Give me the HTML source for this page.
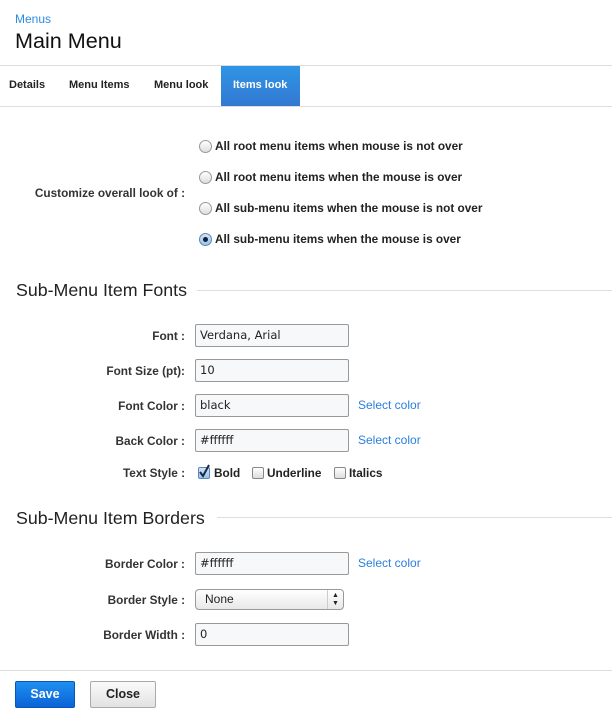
<!DOCTYPE html>
<html><head><style>
body{margin:0;width:612px;height:711px;background:#fff;font-family:"Liberation Sans",Arial,sans-serif;position:relative;overflow:hidden;color:#222}
.a{position:absolute;white-space:nowrap}
.lbl{position:absolute;right:427px;font-size:11.8px;font-weight:bold;color:#333;white-space:nowrap}
.in{position:absolute;left:195px;border:1px solid #999;background:#f7f8fa;font-family:"DejaVu Sans",sans-serif;font-size:11.5px;line-height:21px;padding-left:4px;box-sizing:border-box;width:154px;height:23px;border-radius:2px}
.sel{position:absolute;left:358px;font-size:12px;color:#2a7ee0}
.hl{position:absolute;height:1px;background:#ddd}
.rad{position:absolute;left:199px;width:11px;height:11px;border:1px solid #999;border-radius:50%;background:linear-gradient(#fff,#ddd)}
.rt{position:absolute;left:215px;font-size:11.8px;font-weight:bold;color:#222;white-space:nowrap}
.cb{position:absolute;width:10px;height:10px;border:1px solid #888;border-radius:2px;background:linear-gradient(#fff,#ddd)}
.ct{position:absolute;font-size:11.8px;font-weight:bold;color:#222}
</style></head><body>
<div class="a" style="left:15px;top:12px;font-size:12px;color:#2a8be6">Menus</div>
<div class="a" style="left:15px;top:28px;font-size:21.6px;color:#111">Main Menu</div>
<div class="hl" style="left:0;top:65px;width:612px"></div>
<div class="a" style="left:9px;top:79px;font-size:11px;font-weight:bold">Details</div>
<div class="a" style="left:69px;top:79px;font-size:11px;font-weight:bold">Menu Items</div>
<div class="a" style="left:154px;top:79px;font-size:11px;font-weight:bold">Menu look</div>
<div class="a" style="left:221px;top:66px;width:79px;height:40px;background:linear-gradient(#2f95e4,#3378d2)"></div>
<div class="a" style="left:233px;top:79px;font-size:11px;font-weight:bold;color:#fff">Items look</div>
<div class="hl" style="left:0;top:106px;width:612px"></div>

<div class="lbl" style="top:186px">Customize overall look of :</div>
<div class="rad" style="top:140px"></div><div class="rt" style="top:139px">All root menu items when mouse is not over</div>
<div class="rad" style="top:171px"></div><div class="rt" style="top:170px">All root menu items when the mouse is over</div>
<div class="rad" style="top:202px"></div><div class="rt" style="top:201px">All sub-menu items when the mouse is not over</div>
<div class="rad" style="top:233px;background:linear-gradient(#cfe3f7,#9cc3ea);border-color:#5a88b8"></div><div class="a" style="left:203px;top:237px;width:5px;height:5px;border-radius:50%;background:#123"></div><div class="rt" style="top:232px">All sub-menu items when the mouse is over</div>

<div class="a" style="left:16px;top:280px;font-size:17.8px;color:#222">Sub-Menu Item Fonts</div>
<div class="hl" style="left:197px;top:290px;width:415px"></div>

<div class="lbl" style="top:329px">Font :</div><div class="in" style="top:324px">Verdana, Arial</div>
<div class="lbl" style="top:364px">Font Size (pt):</div><div class="in" style="top:359px">10</div>
<div class="lbl" style="top:399px">Font Color :</div><div class="in" style="top:394px">black</div><div class="sel" style="top:398px">Select color</div>
<div class="lbl" style="top:434px">Back Color :</div><div class="in" style="top:429px">#ffffff</div><div class="sel" style="top:433px">Select color</div>
<div class="lbl" style="top:466px">Text Style :</div>
<div class="cb" style="left:198px;top:467px;background:linear-gradient(#cfe3f7,#9cc3ea);border-color:#5a88b8"></div>
<svg class="a" style="left:197px;top:463px" width="14" height="16"><path d="M3 9 L6 13 L12 2" stroke="#1a2a44" stroke-width="2" fill="none"/></svg>
<div class="ct" style="left:214px;top:466px">Bold</div>
<div class="cb" style="left:252px;top:467px"></div><div class="ct" style="left:267px;top:466px">Underline</div>
<div class="cb" style="left:334px;top:467px"></div><div class="ct" style="left:349px;top:466px">Italics</div>

<div class="a" style="left:16px;top:508px;font-size:17.8px;color:#222">Sub-Menu Item Borders</div>
<div class="hl" style="left:217px;top:517px;width:395px"></div>

<div class="lbl" style="top:557px">Border Color :</div><div class="in" style="top:552px">#ffffff</div><div class="sel" style="top:556px">Select color</div>
<div class="lbl" style="top:593px">Border Style :</div>
<div class="a" style="left:195px;top:589px;width:149px;border:1px solid #999;border-radius:4px;background:linear-gradient(#fff,#e8e8e8);box-sizing:border-box;height:21px;font-size:12px;line-height:19px;padding-left:9px">None<div style="position:absolute;right:0;top:0;width:16px;height:19px;border-left:1px solid #ccc;font-size:7px;line-height:8px;text-align:center;padding-top:2px;box-sizing:border-box">▲<br>▼</div></div>
<div class="lbl" style="top:628px">Border Width :</div><div class="in" style="top:623px">0</div>

<div class="hl" style="left:0;top:670px;width:612px"></div>
<div class="a" style="left:15px;top:681px;width:60px;height:27px;border-radius:2px;background:linear-gradient(#1f8ff0,#0a63d6);border:1px solid #0a55b8;box-sizing:border-box;color:#fff;font-size:12.5px;font-weight:bold;text-align:center;line-height:25px">Save</div>
<div class="a" style="left:90px;top:681px;width:66px;height:27px;border-radius:2px;background:linear-gradient(#fafafa,#e2e2e2);border:1px solid #aaa;box-sizing:border-box;color:#222;font-size:12.5px;font-weight:bold;text-align:center;line-height:25px">Close</div>
</body></html>
